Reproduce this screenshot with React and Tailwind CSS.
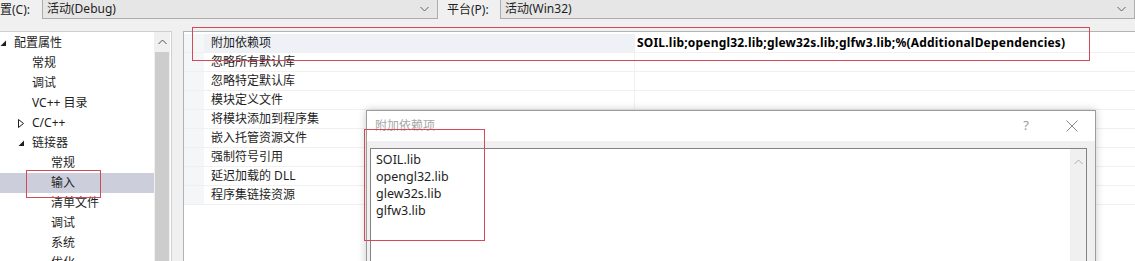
const treeRows = [
  { label: "配置属性", level: 0, arrow: "open" },
  { label: "常规", level: 1 },
  { label: "调试", level: 1 },
  { label: "VC++ 目录", level: 1 },
  { label: "C/C++", level: 1, arrow: "closed" },
  { label: "链接器", level: 1, arrow: "open" },
  { label: "常规", level: 2 },
  { label: "输入", level: 2, selected: true },
  { label: "清单文件", level: 2 },
  { label: "调试", level: 2 },
  { label: "系统", level: 2 },
  { label: "优化", level: 2 },
];

const gridRows = [
  "附加依赖项",
  "忽略所有默认库",
  "忽略特定默认库",
  "模块定义文件",
  "将模块添加到程序集",
  "嵌入托管资源文件",
  "强制符号引用",
  "延迟加载的 DLL",
  "程序集链接资源",
];

const libs = ["SOIL.lib", "opengl32.lib", "glew32s.lib", "glfw3.lib"];

const Chevron = ({ up, color = "#606060" }) => (
  <svg width="9" height="6" viewBox="0 0 9 6">
    <polyline
      points={up ? "0.5,5 4.5,1 8.5,5" : "0.5,1 4.5,5 8.5,1"}
      fill="none"
      stroke={color}
      strokeWidth="1"
    />
  </svg>
);

const TreeArrow = ({ kind }) => {
  if (kind === "open") {
    return (
      <svg width="7" height="7" viewBox="0 0 7 7">
        <polygon points="6,0.5 6,6 0.5,6" fill="#1e1e1e" />
      </svg>
    );
  }
  return (
    <svg width="6" height="9" viewBox="0 0 6 9">
      <polygon points="0.5,0.5 5.5,4.5 0.5,8.5" fill="none" stroke="#1e1e1e" />
    </svg>
  );
};

const Combo = ({ text, className }) => (
  <div
    className={`h-[20px] -mt-px border border-[#acacac] bg-[#e6e6e6] flex items-center justify-between pl-[4px] pr-[8px] ${className}`}
  >
    <span>{text}</span>
    <Chevron />
  </div>
);

const Tree = () => (
  <div className="mt-[10px] w-[172px] h-[240px] bg-white border-y border-r border-[#cfcfcf] flex">
    <div className="flex-1 pt-[1px]">
      {treeRows.map((row, i) => (
        <div
          key={i}
          className={`h-[20px] flex items-center ${row.selected ? "bg-[#cccedb]" : ""}`}
        >
          <div
            className={`flex items-center justify-center ${
              row.level === 0 ? "w-[14px]" : row.level === 1 ? "w-[32px]" : "w-[51px]"
            }`}
          >
            {row.arrow && (
              <span className={row.level === 0 ? "ml-[-8px]" : "ml-[10px]"}>
                <TreeArrow kind={row.arrow} />
              </span>
            )}
          </div>
          <span className="whitespace-nowrap">{row.label}</span>
        </div>
      ))}
    </div>
    <div className="w-[16px] mr-[1px] flex flex-col bg-[#f0f0f0]">
      <div className="h-[20px] flex items-center justify-center">
        <Chevron up color="#505050" />
      </div>
      <div className="flex-1 mx-[1px] bg-[#cdcdcd]" />
    </div>
  </div>
);

const PropertyGrid = () => (
  <div className="ml-[11px] mt-[10px] flex-1 h-[240px] bg-white border-l border-t border-[#b4b4b4] pt-[2px]">
    {gridRows.map((name, i) => (
      <div key={i} className="h-[19px] flex border-b border-[#f0f0f0]">
        <div className="w-[20px] bg-[#f5f6f8]" />
        <div
          className={`w-[430px] pl-[7px] flex items-center whitespace-nowrap ${
            i === 0 ? "bg-[#eef1f6]" : ""
          }`}
        >
          {name}
        </div>
        <div className="flex-1 border-l border-[#f0f0f0] pl-[2px] flex items-center whitespace-nowrap font-bold text-black tracking-[0.2px]">
          {i === 0 ? "SOIL.lib;opengl32.lib;glew32s.lib;glfw3.lib;%(AdditionalDependencies)" : ""}
        </div>
      </div>
    ))}
  </div>
);

const Dialog = () => (
  <div className="absolute left-[366px] top-[110px] w-[730px] h-[170px] bg-[#f0f0f0] border border-[#9c9c9c] shadow-[0_0_8px_rgba(0,0,0,0.22)]">
    <div className="h-[30px] bg-white flex items-center">
      <span className="pl-[8px] text-[#a8a8a8] flex-1">附加依赖项</span>
      <span className="text-[#9a9a9a] text-[13px] mr-[37px]">?</span>
      <svg width="12" height="12" viewBox="0 0 12 12" className="mr-[17px]">
        <path d="M0.5 0.5 L11.5 11.5 M11.5 0.5 L0.5 11.5" stroke="#8a8a8a" strokeWidth="1" />
      </svg>
    </div>
    <div className="mt-[7px] ml-[3px] mr-[8px] h-[140px] bg-white border border-[#828282] flex">
      <div className="flex-1 pl-[5px] pt-[2px] text-[12.5px] leading-[17px] text-[#1e1e1e]">
        {libs.map((l) => (
          <div key={l}>{l}</div>
        ))}
      </div>
      <div className="w-[16px] bg-[#f0f0f0] flex flex-col items-center pt-[10px]">
        <Chevron up color="#b0b0b0" />
      </div>
    </div>
  </div>
);

const Mark = ({ className }) => (
  <div className={`absolute border border-[#d24a58] pointer-events-none ${className}`} />
);

export default function App() {
  return (
    <div className="relative w-[1135px] h-[261px] overflow-hidden bg-[#f0f0f0] text-[12px] text-[#1e1e1e] font-['Noto_Sans','Noto_Sans_CJK_SC',sans-serif]">
      <div className="h-[21px] flex items-start">
        <span className="w-[42px] leading-[19px] whitespace-nowrap">置(C):</span>
        <Combo text="活动(Debug)" className="w-[396px]" />
        <span className="ml-[9px] w-[53px] leading-[19px] whitespace-nowrap">平台(P):</span>
        <Combo text="活动(Win32)" className="flex-1" />
      </div>
      <div className="flex items-start">
        <Tree />
        <PropertyGrid />
      </div>
      <Dialog />
      <Mark className="left-[192px] top-[27px] w-[898px] h-[34px]" />
      <Mark className="left-[26px] top-[170px] w-[75px] h-[28px]" />
      <Mark className="left-[364px] top-[129px] w-[121px] h-[112px]" />
    </div>
  );
}
